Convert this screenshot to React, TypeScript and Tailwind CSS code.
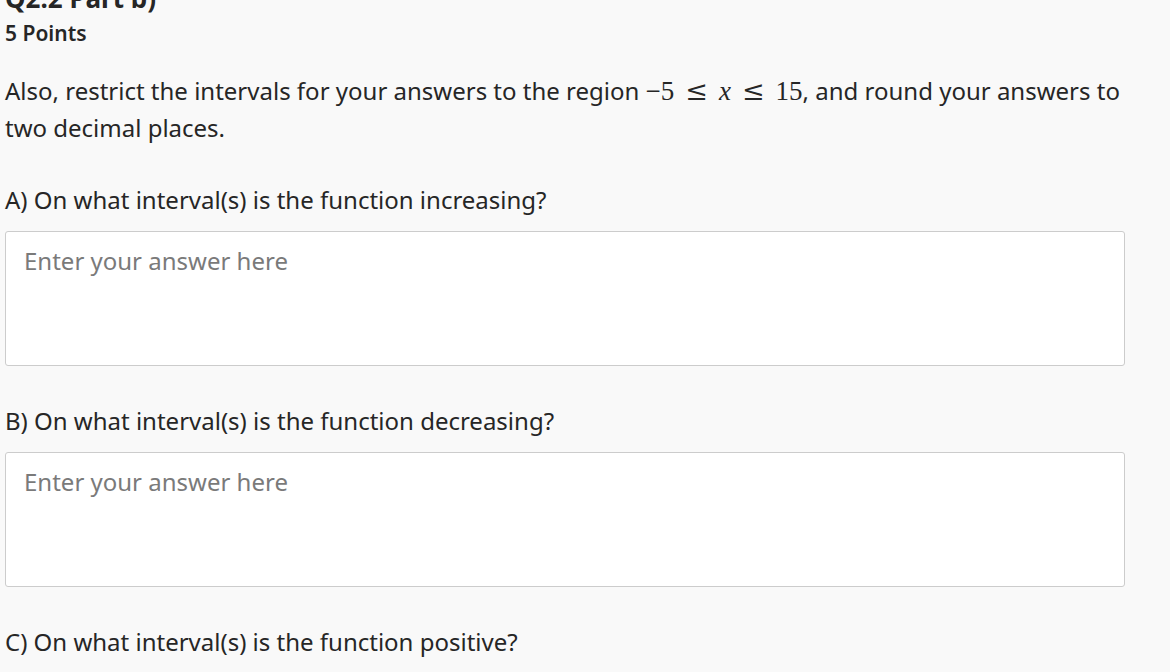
import React from "react";

const questions = [
  "A) On what interval(s) is the function increasing?",
  "B) On what interval(s) is the function decreasing?",
  "C) On what interval(s) is the function positive?",
];

function MathRange() {
  // KaTeX-ish rendering of -5 <= x <= 15
  return (
    <span className="whitespace-nowrap text-[27px] leading-[20px] [font-family:'Liberation_Serif','DejaVu_Serif',serif]">
      <span>−5</span>
      <span className="mx-[11px] text-[27px] [font-family:'DejaVu_Serif',serif]">≤</span>
      <span className="italic">x</span>
      <span className="mx-[11px] text-[27px] [font-family:'DejaVu_Serif',serif]">≤</span>
      <span>15</span>
    </span>
  );
}

export default function App() {
  return (
    <main className="min-h-screen bg-[#f9f9f9] text-[#262626] [font-family:'Noto_Sans',sans-serif] overflow-hidden">
      <div className="w-[1120px] ml-[5px]">
        <h2 className="-mt-[18px] h-[32px] text-[26px] leading-[32px] font-bold">Q2.2 Part b)</h2>
        <div className="mt-[5px] text-[21px] leading-[28px] font-semibold">5 Points</div>

        <p className="mt-[25px] text-[24px] leading-[37px]">
          Also, restrict the intervals for your answers to the region <MathRange />, and round your answers to two decimal places.
        </p>

        {questions.map((q, i) => (
          <div key={q}>
            <div className={i === 0 ? "mt-[39px] text-[24px] leading-[30px]" : "mt-[40px] text-[24px] leading-[30px]"}>{q}</div>
            <textarea
              placeholder="Enter your answer here"
              className="mt-[16px] block w-full h-[135px] resize-none rounded-[3px] border border-[#cccccc] bg-white px-[18px] pt-[14px] text-[24px] leading-[30px] placeholder:text-[#7a7a7a] outline-none"
            />
          </div>
        ))}
      </div>
    </main>
  );
}
